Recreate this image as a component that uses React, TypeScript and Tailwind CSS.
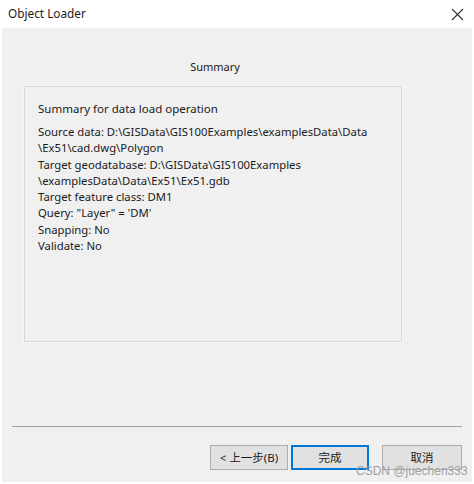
import React from 'react';

const lines = [
    'Source data: D:\\GISData\\GIS100Examples\\examplesData\\Data',
    '\\Ex51\\cad.dwg\\Polygon',
    'Target geodatabase: D:\\GISData\\GIS100Examples',
    '\\examplesData\\Data\\Ex51\\Ex51.gdb',
    'Target feature class: DM1',
    'Query: "Layer" = \'DM\'',
    'Snapping: No',
    'Validate: No',
];

export default function App() {
    return (
        <div className="relative w-[474px] h-[484px] bg-white overflow-hidden text-[#1b1b1b] font-['Noto_Sans','Noto_Sans_CJK_SC',sans-serif]">
            {/* title bar */}
            <div className="h-[28px] flex items-center justify-between pl-[8px] pr-[10px]">
                <span className="text-[11.8px] leading-none">Object Loader</span>
                <svg width="13" height="13" viewBox="0 0 13 13" className="text-[#333]">
                    <path d="M1 1 L12 12 M12 1 L1 12" stroke="currentColor" strokeWidth="1.1" fill="none" />
                </svg>
            </div>

            {/* dialog body */}
            <div className="mx-[2px] h-[454px] bg-[#f0f0f0] flex flex-col">
                <div className="w-[426px] pt-[30px] text-center text-[11px] leading-[18px]">Summary</div>

                <div className="ml-[22px] mt-[10px] w-[378px] h-[256px] border border-[#d9d9d9] shadow-[0_0_0_1px_#f7f7f7] px-[13px] pt-[13px]">
                    <div className="text-[11.5px] leading-[18px]">Summary for data load operation</div>
                    <div className="mt-[6px] text-[11.3px] leading-[16.3px]">
                        {lines.map((l, i) => (
                            <div key={i} className="whitespace-nowrap">{l}</div>
                        ))}
                    </div>
                </div>

                <div className="flex-1" />

                <div className="mx-[10px] h-[2px] border-t border-[#a0a0a0] border-b-white" />

                <div className="flex justify-end pr-[10px] mt-[17px] mb-[12px] text-[11.5px]">
                    <button className="w-[78px] h-[25px] bg-[#e1e1e1] border border-[#adadad] flex items-center justify-center">
                        &lt; 上一步(B)
                    </button>
                    <button className="ml-[3px] w-[78px] h-[25px] bg-[#e1e1e1] border-2 border-[#0078d7] flex items-center justify-center">
                        完成
                    </button>
                    <button className="ml-[13px] w-[80px] h-[25px] bg-[#e1e1e1] border border-[#adadad] flex items-center justify-center">
                        取消
                    </button>
                </div>
            </div>

            {/* watermark */}
            <div className="absolute left-[356px] top-[463px] whitespace-nowrap text-[12px] leading-[16px] text-[#a0a0a0] font-['Liberation_Sans',sans-serif]">
                CSDN @juechen333
            </div>
        </div>
    );
}
